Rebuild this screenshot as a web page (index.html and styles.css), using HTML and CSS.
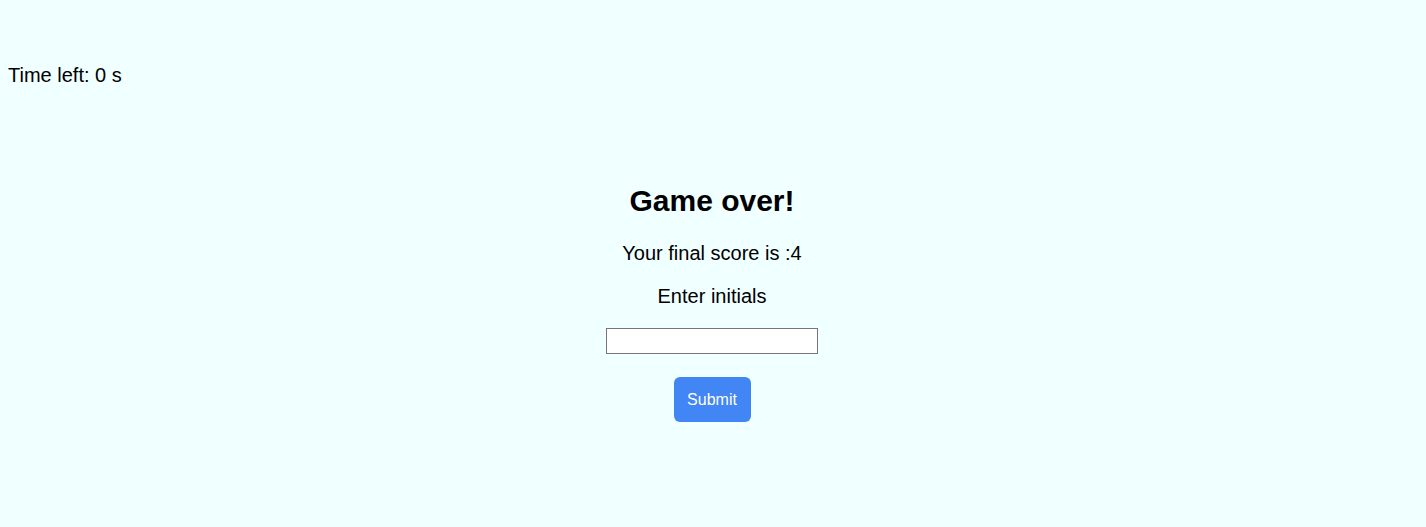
FILE: index.html
```html
<!DOCTYPE html>
<html>
<head>
<meta charset="utf-8">
<link rel="stylesheet" href="styles.css">
</head>
<body>
<header class="timer">Time left: 0 s</header>
<main class="end">
  <h1 class="title">Game over!</h1>
  <p class="line">Your final score is :4</p>
  <p class="line">Enter initials</p>
  <input class="initials" type="text">
  <button class="submit">Submit</button>
</main>
</body>
</html>
```
FILE: styles.css
```css
html, body {
  background: #f0ffff;
}
body {
  margin: 0;
  padding: 0 8px;
  font-family: "Liberation Sans", Arial, sans-serif;
  color: #000;
}
.timer {
  font-size: 20px;
  line-height: 23px;
  padding-top: 64px;
}
.end {
  display: flex;
  flex-direction: column;
  align-items: center;
  padding-top: 97px;
  margin-right: 2px;
}
.title {
  font-size: 30px;
  line-height: 34px;
  margin: 0;
  font-weight: bold;
}
.line {
  font-size: 20px;
  line-height: 23px;
  margin: 0;
}
.title + .line {
  margin-top: 24px;
}
.line + .line {
  margin-top: 20px;
}
.initials {
  margin-top: 20px;
  width: 212px;
  height: 26px;
  box-sizing: border-box;
  border: 1px solid #767676;
  background: #fff;
  padding: 1px 2px;
}
.submit {
  margin-top: 23px;
  width: 77px;
  height: 45px;
  border: none;
  border-radius: 6px;
  background: #4285f4;
  color: #fff;
  font-family: "Liberation Sans", Arial, sans-serif;
  font-size: 16px;
}
```
